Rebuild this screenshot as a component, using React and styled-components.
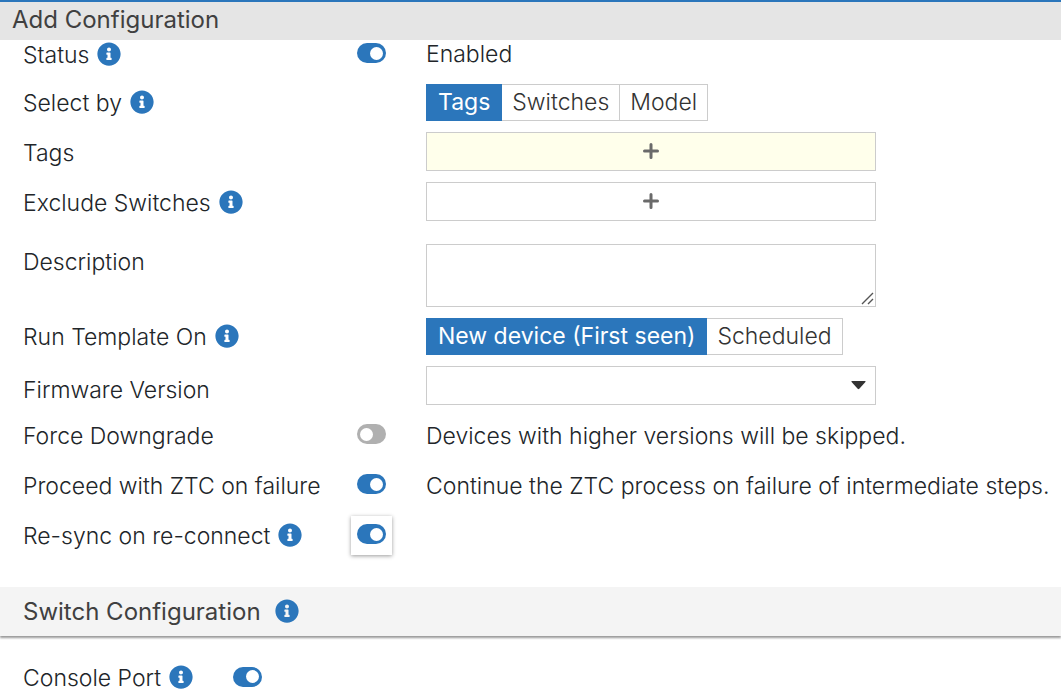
import React, { useState } from 'react';
import styled, { createGlobalStyle } from 'styled-components';
import { FaInfoCircle } from 'react-icons/fa';

const GlobalStyle = createGlobalStyle`
  * {
    box-sizing: border-box;
  }

  body {
    margin: 0;
    background-color: #fff;
    color: #212529;
    font-family: Inter, "Open Sans", sans-serif;
    font-size: 23px;
    font-weight: 300;
    line-height: 28px;
  }

  button, textarea, select {
    font: inherit;
    color: inherit;
  }
`;

const PageHeader = styled.header`
  height: 40px;
  padding: 4px 12px;
  border-top: 2px solid #2b76bb;
  background-color: #e5e5e5;
`;

const PageTitle = styled.h1`
  margin: 0;
  color: #404040;
  font-size: 24px;
  font-weight: 400;
`;

const Form = styled.form`
  display: flex;
  flex-direction: column;
  gap: 11px;
  padding-bottom: 32px;
`;

const Row = styled.div`
  display: grid;
  grid-template-columns: 328px 75px minmax(0, 1fr);
  align-items: ${props => (props.$top ? 'start' : 'center')};
  min-height: ${props => props.$height || 39}px;
  margin-top: ${props => (props.$spaced ? 12 : 0)}px;
  padding-left: 23px;
`;

const LabelCell = styled.div`
  display: flex;
  align-items: center;
  gap: 8px;
  padding-top: ${props => props.$drop}px;
  white-space: nowrap;
`;

const InfoButton = styled.button`
  display: flex;
  padding: 0;
  margin-bottom: 2px;
  border: 0;
  background: none;
  color: #2b76bb;
  cursor: pointer;

  svg {
    width: 24px;
    height: 24px;
  }
`;

const ToggleBox = styled.div`
  display: flex;
  justify-self: start;
  align-items: center;
  justify-content: center;
  width: 41px;
  height: ${props => (props.$short ? 28 : 39)}px;
  padding-bottom: ${props => (props.$short ? 2 : 3)}px;
  box-shadow: ${props => (props.$raised ? '0 1px 4px rgba(0, 0, 0, 0.4)' : 'none')};
`;

const Switch = styled.input`
  appearance: none;
  display: flex;
  align-items: center;
  justify-content: flex-start;
  width: 29px;
  height: 20px;
  margin: 0;
  padding: 0 3px;
  border-radius: 10px;
  background-color: #b0b0b0;
  cursor: pointer;

  &::before {
    content: '';
    width: 13px;
    height: 13px;
    border-radius: 50%;
    background-color: #fff;
  }

  &:checked {
    justify-content: flex-end;
    background-color: #2b76bb;
  }
`;

const Note = styled.span`
  grid-column: 3;
  white-space: nowrap;
`;

const Segments = styled.div`
  grid-column: 3;
  display: flex;
`;

const Segment = styled.button`
  height: 37px;
  padding: 0 ${props => (props.$active ? 11 : 10)}px 1px;
  border: 1px solid ${props => (props.$active ? '#2b76bb' : '#ccc')};
  border-left-width: ${props => (props.$first ? 1 : 0)}px;
  background-color: ${props => (props.$active ? '#2b76bb' : '#fff')};
  color: ${props => (props.$active ? '#fff' : '#333')};
  font-weight: ${props => (props.$active ? 400 : 300)};
  white-space: nowrap;
  cursor: pointer;
`;

const AddButton = styled.button`
  grid-column: 3;
  display: flex;
  align-items: center;
  justify-content: center;
  width: 450px;
  max-width: 100%;
  height: 39px;
  padding-bottom: 2px;
  border: 1px solid #ccc;
  background-color: ${props => (props.$required ? '#ffffeb' : '#fff')};
  cursor: pointer;
`;

const DescriptionWrap = styled.div`
  grid-column: 3;
  position: relative;
  width: 450px;
  max-width: 100%;

  svg {
    position: absolute;
    right: 2px;
    bottom: 2px;
    pointer-events: none;
  }
`;

const Description = styled.textarea`
  display: block;
  width: 100%;
  height: 63px;
  border: 1px solid #ccc;
  background-color: #fff;
  resize: vertical;

  &::-webkit-resizer {
    background: none;
  }
`;

const SelectWrap = styled.div`
  grid-column: 3;
  position: relative;
  width: 450px;
  max-width: 100%;

  svg {
    position: absolute;
    top: 15px;
    right: 10px;
    pointer-events: none;
  }
`;

const Select = styled.select`
  appearance: none;
  display: block;
  width: 100%;
  height: 39px;
  padding: 0 32px 0 8px;
  border: 1px solid #ccc;
  border-radius: 0;
  background-color: #fff;
`;

const SectionHeader = styled.div`
  display: flex;
  align-items: center;
  gap: 14px;
  height: 49px;
  padding-left: 23px;
  background-color: #f4f4f4;
  box-shadow: 0 2px 2px rgba(0, 0, 0, 0.4);
`;

const SectionTitle = styled.h2`
  margin: 0;
  color: #404040;
  font-size: 24px;
  font-weight: 400;
`;

const PortRow = styled.div`
  display: flex;
  align-items: center;
  gap: 34px;
  padding: 27px 0 0 23px;
`;

const Info = ({ about }) => (
  <InfoButton type="button" aria-label={`About ${about}`}>
    <FaInfoCircle />
  </InfoButton>
);

const PlusIcon = () => (
  <svg width="16" height="16" viewBox="0 0 16 16" aria-hidden="true">
    <path d="M8 1.5v13M1.5 8h13" stroke="#6a6a6a" strokeWidth="3" strokeLinecap="round" />
  </svg>
);

const FieldLabel = ({ text, id, info, drop = 1 }) => (
  <LabelCell $drop={drop}>
    {id ? <label htmlFor={id}>{text}</label> : <span>{text}</span>}
    {info && <Info about={text} />}
  </LabelCell>
);

const SegmentedControl = ({ label, options }) => {
  const [selected, setSelected] = useState(options[0]);

  return (
    <Segments role="group" aria-label={label}>
      {options.map((option, index) => (
        <Segment
          key={option}
          type="button"
          $first={index === 0}
          $active={option === selected}
          aria-pressed={option === selected}
          onClick={() => setSelected(option)}
        >
          {option}
        </Segment>
      ))}
    </Segments>
  );
};

const ToggleRow = ({ id, text, info, on, note, raised, compact }) => (
  <Row $top={compact} $height={compact ? 33 : 39}>
    <FieldLabel id={id} text={text} info={info} />
    <ToggleBox $raised={raised} $short={compact}>
      <Switch id={id} type="checkbox" defaultChecked={on} />
    </ToggleBox>
    {note && <Note>{note}</Note>}
  </Row>
);

const App = () => (
  <>
    <GlobalStyle />
    <PageHeader>
      <PageTitle>Add Configuration</PageTitle>
    </PageHeader>
    <main>
      <Form>
        <ToggleRow id="status" text="Status" info on note="Enabled" compact />
        <Row $height={37}>
          <FieldLabel text="Select by" info />
          <SegmentedControl label="Select by" options={['Tags', 'Switches', 'Model']} />
        </Row>
        <Row>
          <FieldLabel id="tags" text="Tags" drop={2} />
          <AddButton id="tags" type="button" $required>
            <PlusIcon />
          </AddButton>
        </Row>
        <Row>
          <FieldLabel id="exclude" text="Exclude Switches" info drop={2} />
          <AddButton id="exclude" type="button">
            <PlusIcon />
          </AddButton>
        </Row>
        <Row $top $spaced>
          <FieldLabel id="description" text="Description" drop={4} />
          <DescriptionWrap>
            <Description id="description" />
            <svg width="13" height="13" viewBox="0 0 13 13" aria-hidden="true">
              <path d="M1 12L12 1M7 12l5-5" stroke="#555" strokeWidth="1.4" />
            </svg>
          </DescriptionWrap>
        </Row>
        <Row $height={37}>
          <FieldLabel text="Run Template On" info />
          <SegmentedControl label="Run Template On" options={['New device (First seen)', 'Scheduled']} />
        </Row>
        <Row>
          <FieldLabel id="firmware" text="Firmware Version" drop={8} />
          <SelectWrap>
            <Select id="firmware" defaultValue="">
              <option value="" />
            </Select>
            <svg width="15" height="9" viewBox="0 0 15 9" aria-hidden="true">
              <path d="M1 0h13q1 0 .4.9L8.3 7.8q-.8.8-1.6 0L.6.9Q0 0 1 0z" fill="#333" />
            </svg>
          </SelectWrap>
        </Row>
        <ToggleRow id="downgrade" text="Force Downgrade" note="Devices with higher versions will be skipped." />
        <ToggleRow
          id="proceed"
          text="Proceed with ZTC on failure"
          on
          note="Continue the ZTC process on failure of intermediate steps."
        />
        <ToggleRow id="resync" text="Re-sync on re-connect" info on raised />
      </Form>
      <SectionHeader>
        <SectionTitle>Switch Configuration</SectionTitle>
        <Info about="Switch Configuration" />
      </SectionHeader>
      <PortRow>
        <FieldLabel id="console" text="Console Port" info />
        <ToggleBox $short>
          <Switch id="console" type="checkbox" defaultChecked />
        </ToggleBox>
      </PortRow>
    </main>
  </>
);

export default App;
